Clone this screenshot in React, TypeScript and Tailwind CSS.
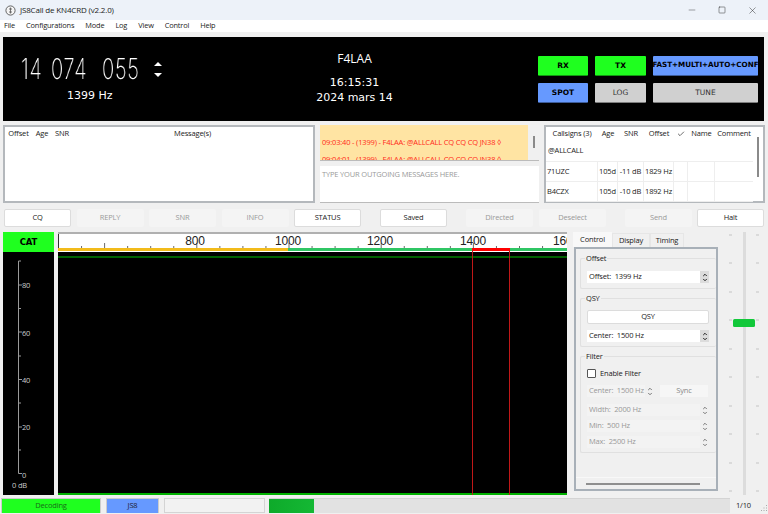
import { Minus, Square, X, ChevronUp, ChevronDown, Check } from "lucide-react";

const UI = "font-['Open_Sans',sans-serif]";
const DV = "font-['DejaVu_Sans',sans-serif]";

function LedButton({ label, className }: { label: string; className: string }) {
  return (
    <div className={`h-[20px] rounded-[1px] border-b border-black/40 flex items-center justify-center ${DV} ${className}`}>
      {label}
    </div>
  );
}

function ActionButton({ label, off }: { label: string; off?: boolean }) {
  return (
    <div
      className={`w-[67px] h-[18px] rounded-[2px] flex items-center justify-center text-[7.5px] ${
        off ? "bg-[#f4f4f4] text-[#9a9a9a]" : "bg-white border border-[#dcdcdc] text-[#222]"
      }`}
    >
      {label}
    </div>
  );
}

function Spin({ label, off, className = "w-[122px]" }: { label: string; off?: boolean; className?: string }) {
  return (
    <div className={`h-[12px] flex items-center justify-between text-[7.5px] ${off ? "bg-[#f3f3f3] text-[#999]" : "bg-white text-[#222]"} ${className}`}>
      <span className="pl-[2px] whitespace-pre">{label}</span>
      <div className={`w-[9px] h-full flex flex-col items-center justify-center ${off ? "text-[#777] bg-[#f0f0f0]" : "text-[#222] bg-[#dcdcdc]"}`}>
        <ChevronUp size={6} strokeWidth={4} className="-mb-[1px]" />
        <ChevronDown size={6} strokeWidth={4} />
      </div>
    </div>
  );
}

function Group({ title, className, children }: { title: string; className: string; children: React.ReactNode }) {
  return (
    <div className={`relative border border-r-0 border-[#e0e0e0] rounded-[2px] pl-[6px] flex flex-col ${className}`}>
      <span className="absolute -top-[7px] left-[4px] bg-[#f0f0f0] px-[1px] text-[7.5px] leading-[12px] text-[#222]">{title}</span>
      {children}
    </div>
  );
}

function Ruler() {
  const ticks = [];
  for (let i = 1; i < 22; i++) {
    const x = 0.5 + i * 23.05;
    const len = i % 4 === 2 ? 5 : 2;
    ticks.push(<line key={i} x1={x} x2={x} y1={14 - len} y2={14} stroke="#444" strokeWidth="0.8" />);
  }
  return (
    <svg width="509" height="18" viewBox="0 0 509 18" className="block">
      <rect width="509" height="18" fill="white" />
      <line x1="0.500" x2="0.500" y1="0" y2="14" stroke="#333" strokeWidth="1" />
      {ticks}
      {[
        ["800", 137],
        ["1000", 230],
        ["1200", 322],
        ["1400", 415],
        ["1600", 508],
      ].map(([t, x]) => (
        <text key={t} x={x} y="10.500" fontSize="12" fontFamily="'Liberation Sans',sans-serif" textAnchor="middle" fill="#222">
          {t}
        </text>
      ))}
      <rect y="14" width="230" height="3" fill="#f2bb1a" />
      <rect x="230" y="14" width="279" height="3" fill="#2fc664" />
      <rect x="414" y="14" width="38" height="3" fill="#ff0000" />
    </svg>
  );
}

function Meter() {
  const labels = ["80", "60", "40", "20", "0"];
  return (
    <svg width="51" height="243" viewBox="0 0 51 243" className="block">
      <path d="M15.500 9V221.500" stroke="#9a9a9a" strokeWidth="1" fill="none" />
      <path d="M15.500 9H18M15.500 33H19M15.500 56.500H18M15.500 80H19M15.500 104H18M15.500 127.500H19M15.500 151H18M15.500 175H19M15.500 198H18M15.500 221.500H19" stroke="#9a9a9a" strokeWidth="1" fill="none" />
      {labels.map((t, i) => (
        <text key={t} x="19" y={[36, 83.5, 131, 178, 226][i]} fontSize="7.500" fontFamily="'Open Sans',sans-serif" fill="#ccc">
          {t}
        </text>
      ))}
      <text x="9" y="236" fontSize="7.500" fontFamily="'Open Sans',sans-serif" fill="#ccc">
        0 dB
      </text>
    </svg>
  );
}

function Slider() {
  return (
    <svg width="47" height="263" viewBox="0 0 47 263" className="block">
      <rect x="22" width="3" height="263" fill="#dcdcdc" />
      {[3, 31, 60, 88, 117, 145, 174, 202, 231, 259].map((y) => (
        <g key={y} stroke="#c4c4c4" strokeWidth="1">
          <line x1="8" x2="11" y1={y} y2={y} />
          <line x1="35" x2="38" y1={y} y2={y} />
        </g>
      ))}
      <rect x="12" y="87" width="22" height="8" rx="1.500" fill="#12c83a" />
    </svg>
  );
}

export default function App() {
  return (
    <div className={`w-[768px] h-[514px] bg-[#f0f0f0] overflow-hidden flex flex-col ${UI} tracking-[-0.17px] text-[#222]`}>
      {/* title bar */}
      <div className="h-[20px] bg-[#edf2f9] flex items-center pl-[5px] text-[8px]">
        <svg width="11" height="11" viewBox="0 0 11 11" className="mr-[4px]">
          <circle cx="5.500" cy="5.500" r="4.600" fill="#f4f4f4" stroke="#555" strokeWidth="0.9" />
          <path d="M5.500 2.500V8.500M4 4H7M4 7H7" stroke="#555" strokeWidth="0.8" />
        </svg>
        <span>JS8Call de KN4CRD (v2.2.0)</span>
        <div className="ml-auto flex items-center gap-[21px] pr-[10px] text-[#222]">
          <Minus size={10} strokeWidth={1} />
          <Square size={8} strokeWidth={1.4} />
          <X size={11} strokeWidth={1} />
        </div>
      </div>
      {/* menu */}
      <div className="h-[12px] bg-white flex items-center pl-[4px] gap-[11px] text-[7.4px]">
        {["File", "Configurations", "Mode", "Log", "View", "Control", "Help"].map((m) => (
          <span key={m}>{m}</span>
        ))}
      </div>

      {/* radio panel */}
      <div className={`mt-[5px] mx-[3px] h-[84px] w-[761px] bg-black text-white flex tracking-normal ${DV}`}>
        <div className="w-[180px] pt-[17px] flex flex-col items-start">
          <div className="relative h-[30px] w-full flex font-['Inter',sans-serif] font-extralight text-[28px] leading-[30px] tracking-[1px]">
            <span className="ml-[18px] w-[30px] scale-x-[0.72] origin-left will-change-transform">14</span>
            <span className="w-[51px] scale-x-[0.72] origin-left will-change-transform">074</span>
            <span className="w-[50px] scale-x-[0.72] origin-left will-change-transform">055</span>
            <div className="ml-[2px] pt-[8px] flex flex-col gap-[7px]">
              <div className="w-0 h-0 border-x-[4px] border-x-transparent border-b-[4px] border-b-white" />
              <div className="w-0 h-0 border-x-[4px] border-x-transparent border-t-[4px] border-t-white" />
            </div>
          </div>
          <div className="mt-[5px] ml-[64px] text-[11px] leading-[14px]">1399 Hz</div>
        </div>
        <div className="ml-[113px] w-[117px] flex flex-col items-center pt-[15px]">
          <div className="text-[12px] leading-[14px] font-['Open_Sans',sans-serif]">F4LAA</div>
          <div className="mt-[9px] text-[11px] leading-[15px]">16:15:31</div>
          <div className="text-[11px] leading-[15px]">2024 mars 14</div>
        </div>
        <div className="ml-[125px] pt-[19px] grid grid-cols-[50px_51px_105px] grid-rows-[20px_20px] gap-x-[7px] gap-y-[7px] h-fit text-black">
          <LedButton label="RX" className="bg-[#1fff1f] font-bold text-[7.5px]" />
          <LedButton label="TX" className="bg-[#1fff1f] font-bold text-[7.5px]" />
          <LedButton label="FAST+MULTI+AUTO+CONF" className="bg-[#6699ff] font-bold whitespace-nowrap text-[7.2px]" />
          <LedButton label="SPOT" className="bg-[#6699ff] font-bold text-[7.5px]" />
          <LedButton label="LOG" className="bg-[#d0d0d0] text-[#333] text-[7.5px]" />
          <LedButton label="TUNE" className="bg-[#d0d0d0] text-[#333] text-[7.5px]" />
        </div>
      </div>

      {/* messages row */}
      <div className="mt-[4px] h-[78px] pl-[3px] flex text-[7.5px]">
        <div className="w-[312px] bg-white border-2 border-[#b4b8bc]">
          <div className="flex h-[14px] items-center text-center">
            <span className="w-[27px]">Offset</span>
            <span className="w-[20px]">Age</span>
            <span className="w-[20px]">SNR</span>
            <span className="flex-1">Message(s)</span>
          </div>
        </div>
        <div className="ml-[5px] w-[219px] flex flex-col">
          <div className="h-[36px] flex border-b border-[#bbb]">
            <div className="w-[208px] bg-[#ffe4a3] text-[#ff2a1a] overflow-hidden pl-[2px] pt-[9px] leading-[17px] whitespace-nowrap">
              <div>09:03:40 - (1399) - F4LAA: @ALLCALL CQ CQ CQ JN38 ◊</div>
              <div>09:04:01 - (1399) - F4LAA: @ALLCALL CQ CQ CQ JN38 ◊</div>
            </div>
            <div className="flex-1 flex justify-center pt-[11px]">
              <div className="w-[2px] h-[12px] bg-[#8a8a8a]" />
            </div>
          </div>
          <div className="mt-[5px] flex-1 bg-white border-b border-[#bbb] pl-[2px] pt-[1px] text-[#9a9a9a] leading-[14px]">TYPE YOUR OUTGOING MESSAGES HERE.</div>
        </div>
        <div className="ml-[5px] w-[221px] bg-white border-2 border-[#b4b8bc] flex relative">
          <div className="grid grid-cols-[52px_20px_26px_30px_14px_27px_38px] grid-rows-[14px_21px_20px_20px] w-[207px] text-center items-center whitespace-nowrap">
            <span className="h-full flex items-center justify-center">Callsigns (3)</span>
            <span>Age</span>
            <span>SNR</span>
            <span>Offset</span>
            <Check size={8} strokeWidth={2} className="justify-self-center" />
            <span>Name</span>
            <span>Comment</span>
            <span className="col-span-7 h-full flex items-center pl-[2px] border-b border-[#eee]">@ALLCALL</span>
            {[
              ["71UZC", "105d", "-11 dB", "1829 Hz"],
              ["B4CZX", "105d", "-10 dB", "1892 Hz"],
            ].map((r) => [
              ...r.map((c, i) => (
                <span key={r[0] + i} className={`h-full flex items-center border-b border-r border-[#eee] ${i === 0 ? "pl-[1px]" : "justify-center"}`}>
                  {c}
                </span>
              )),
              <span key={r[0] + "a"} className="h-full border-b border-r border-[#eee]" />,
              <span key={r[0] + "b"} className="h-full border-b border-r border-[#eee]" />,
              <span key={r[0] + "c"} className="h-full border-b border-[#eee]" />,
            ])}
          </div>
          <div className="flex-1 flex justify-center pt-[10px]">
            <div className="w-[2px] h-[40px] bg-[#8a8a8a]" />
          </div>
        </div>
      </div>

      {/* action buttons */}
      <div className="mt-[6px] pl-[4px] flex gap-[19px]">
        <div className="flex gap-[5.500px]">
          <ActionButton label="CQ" />
          <ActionButton label="REPLY" off />
          <ActionButton label="SNR" off />
          <ActionButton label="INFO" off />
          <ActionButton label="STATUS" />
        </div>
        <ActionButton label="Saved" />
        <div className="flex gap-[6px]">
          <ActionButton label="Directed" off />
          <ActionButton label="Deselect" off />
        </div>
        <div className="flex gap-[5px]">
          <ActionButton label="Send" off />
          <ActionButton label="Halt" />
        </div>
      </div>

      {/* waterfall row */}
      <div className="mt-[5px] h-[263px] pl-[3px] flex">
        <div className="w-[51px] shrink-0 flex flex-col">
          <div className={`h-[20px] bg-[#1fff1f] flex items-center justify-center text-[8.5px] font-bold text-black ${DV}`}>CAT</div>
          <div className="flex-1 bg-black">
            <Meter />
          </div>
        </div>
        <div className="relative ml-[4px] w-[509px] shrink-0 flex flex-col border-t-2 border-[#b0b0b0] overflow-hidden">
          <Ruler />
          <div className="flex-1 bg-black border-b-2 border-[#00b000] flex flex-col">
            <div className="mt-[4px] h-[2px] bg-[#006000]" />
          </div>
          <div className="absolute top-[16px] bottom-0 left-[414px] w-px bg-[#c01818]" />
          <div className="absolute top-[16px] bottom-0 left-[451px] w-px bg-[#c01818]" />
        </div>
        <div className="ml-[6px] w-[146px] shrink-0 flex flex-col text-[7.5px]">
          <div className="flex h-[15px] items-end">
            <span className="w-[39px] h-[15px] bg-[#f8f8f8] flex items-center justify-center">Control</span>
            <span className="w-[38px] h-[14px] bg-[#f0f0f0] border border-b-0 border-[#e6e6e6] flex items-center justify-center">Display</span>
            <span className="w-[34px] h-[14px] bg-[#f0f0f0] border border-b-0 border-[#e6e6e6] flex items-center justify-center">Timing</span>
          </div>
          <div className="w-[144px] ml-[1px] h-[244px] border-2 border-[#a8b0b8] pl-[4px] pt-[9px] flex flex-col">
            <Group title="Offset" className="h-[31px] pt-[12px]">
              <Spin label="Offset:  1399 Hz" />
            </Group>
            <Group title="QSY" className="mt-[9px] h-[49px] pt-[11px]">
              <div className="w-[122px] h-[14px] bg-white border border-[#dcdcdc] rounded-[2px] flex items-center justify-center">QSY</div>
              <div className="mt-[6px]">
                <Spin label="Center:  1500 Hz" />
              </div>
            </Group>
            <Group title="Filter" className="mt-[9px] h-[97px] pt-[11px]">
              <div className="flex items-center h-[11px]">
                <div className="w-[9px] h-[9px] bg-white border border-[#555] rounded-[1px] mr-[4px]" />
                Enable Filter
              </div>
              <div className="mt-[6px] flex items-center">
                <Spin off label="Center:  1500 Hz" className="w-[67px]" />
                <div className="ml-[6px] w-[48px] h-[12px] bg-[#f6f6f6] text-[#888] flex items-center justify-center">Sync</div>
              </div>
              <div className="mt-[7px] flex flex-col gap-[4px]">
                <Spin off label="Width:  2000 Hz" />
                <Spin off label="Min:  500 Hz" />
                <Spin off label="Max:  2500 Hz" />
              </div>
            </Group>
            <div className="mt-auto mb-[3px] border-t border-[#f8f8f8] pt-[5px] pb-[1px] -ml-[4px] pl-[10px]">
              <div className="h-[2px] w-[114px] bg-[#8f8f8f]" />
            </div>
          </div>
        </div>
        <div className="ml-[2px] shrink-0">
          <Slider />
        </div>
      </div>

      {/* status bar */}
      <div className="mt-[3px] h-[15px] pl-[1px] flex text-[7.5px]">
        <div className="w-[100px] shrink-0 bg-[#1fff1f] border-x border-t border-[#ccc] flex items-center justify-center text-[#176b17]">Decoding</div>
        <div className="ml-[5px] w-[53px] shrink-0 bg-[#6699ff] border-x border-t border-[#ccc] flex items-center justify-center text-[#223]">JS8</div>
        <div className="ml-[5px] w-[101px] shrink-0 bg-[#f2f2f2] border border-[#d4d4d4]" />
        <div className="ml-[4px] w-[461px] shrink-0 bg-[#e2e2e2] border-t border-[#d4d4d4]">
          <div className="w-[45px] h-full bg-gradient-to-r from-[#0eaa2a] to-[#14b834]" />
        </div>
        <span className="ml-[6px] leading-[15px] w-[14px] shrink-0">1/10</span>
        <svg width="8" height="8" viewBox="0 0 8 8" className="ml-[10px] mt-[6px] shrink-0">
          <path d="M6.500 1V2M4 3.500V4.500M6.500 3.500V4.500M1.500 6V7M4 6V7M6.500 6V7" stroke="#aaa" strokeWidth="1" />
        </svg>
      </div>
    </div>
  );
}
